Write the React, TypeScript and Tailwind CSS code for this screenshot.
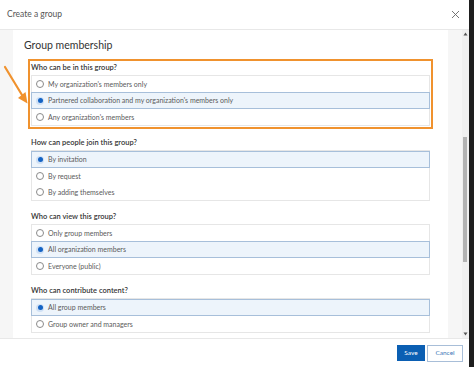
import React from "react";

type Opt = { label: string; selected?: boolean };

const Radio = ({ on }: { on?: boolean }) =>
  on ? (
    <span className="w-[8px] h-[8px] rounded-full bg-[#cfe0f5] flex items-center justify-center shrink-0">
      <span className="w-[5px] h-[5px] rounded-full bg-[#1463c4]" />
    </span>
  ) : (
    <span className="w-[8px] h-[8px] rounded-full border border-[#8a8a8a] bg-white shrink-0" />
  );

const Options = ({ opts }: { opts: Opt[] }) => (
  <div className="border border-[#e6e6e6] bg-white flex flex-col">
    {opts.map((o) => (
      <div
        key={o.label}
        className={
          o.selected
            ? "h-[17px] flex items-center gap-[4px] pl-[4px] bg-[#edf4fb] border border-[#a7bfda] -mx-px"
            : "h-[16px] flex items-center gap-[4px] pl-[4px]"
        }
      >
        <Radio on={o.selected} />
        <span className="text-[7px] leading-none text-[#5a5a5a]">{o.label}</span>
      </div>
    ))}
  </div>
);

const Section = ({ label, opts, first }: { label: string; opts: Opt[]; first?: boolean }) => (
  <div className={first ? "flex flex-col" : "flex flex-col mt-[9px] ml-[7px] w-[399px]"}>
    <div className="h-[14px] flex items-center text-[7.5px] font-semibold text-[#353535]">{label}</div>
    <Options opts={opts} />
  </div>
);

export default function App() {
  return (
    <div
      className="w-[474px] h-[367px] flex bg-white overflow-hidden relative"
      style={{ fontFamily: "Lato, 'Open Sans', sans-serif" }}
    >
      <div className="w-[469px] flex flex-col">
        <div className="h-[30px] border-b border-[#e8e8e8] flex items-center justify-between pl-[7px] pr-[9px]">
          <span className="text-[8.5px] text-[#555]">Create a group</span>
          <svg width="9" height="9" viewBox="0 0 9 9">
            <path d="M1 1 L8 8 M8 1 L1 8" stroke="#666" strokeWidth="0.9" fill="none" />
          </svg>
        </div>
        <div className="h-[308px] flex bg-[#f6f6f6]">
          <div className="ml-[13px] w-[435px] bg-white pl-[11px] pt-[9px] flex flex-col">
            <div className="h-[14px] flex items-center text-[10.5px] text-[#333]">Group membership</div>
            <div className="mt-[6px] ml-[4px] w-[405px] border-2 border-[#f0922e] px-px pb-px">
              <Section
                first
                label="Who can be in this group?"
                opts={[
                  { label: "My organization's members only" },
                  { label: "Partnered collaboration and my organization's members only", selected: true },
                  { label: "Any organization's members" },
                ]}
              />
            </div>
            <div className="h-[0px] -mt-[2px]" />
            <Section
              label="How can people join this group?"
              opts={[{ label: "By invitation", selected: true }, { label: "By request" }, { label: "By adding themselves" }]}
            />
            <Section
              label="Who can view this group?"
              opts={[{ label: "Only group members" }, { label: "All organization members", selected: true }, { label: "Everyone (public)" }]}
            />
            <Section
              label="Who can contribute content?"
              opts={[{ label: "All group members", selected: true }, { label: "Group owner and managers" }]}
            />
          </div>
          <div className="w-[14px]" />
          <div className="w-[7px] bg-[#f0f0f0] flex flex-col items-center justify-between py-[2px]">
            <svg width="5" height="4" viewBox="0 0 5 4">
              <path d="M0.5 3.5 L2.5 0.5 L4.5 3.5 Z" fill="#555" />
            </svg>
            <div className="flex-1 w-full flex flex-col pt-[101px] pb-[70px]">
              <div className="flex-1 w-[4px] ml-[1px] bg-[#b3b3b3]" />
            </div>
            <svg width="5" height="4" viewBox="0 0 5 4">
              <path d="M0.5 0.5 L2.5 3.5 L4.5 0.5 Z" fill="#555" />
            </svg>
          </div>
        </div>
        <div className="h-[29px] border-t border-[#e8e8e8] flex items-center justify-end gap-[2px] pr-[6px]">
          <button className="w-[28px] h-[16px] bg-[#0b5fb3] text-white text-[6.5px] leading-none">Save</button>
          <button className="w-[36px] h-[17px] border border-[#a8bed8] bg-white text-[#3e78b8] text-[6.5px] leading-none">
            Cancel
          </button>
        </div>
      </div>
      <div className="w-[5px] bg-[#1e1e1e]" />
      <svg className="absolute left-0 top-[60px]" width="34" height="50" viewBox="0 0 34 50">
        <path d="M5 7 L22 35" stroke="#f0922e" strokeWidth="2.2" fill="none" strokeLinecap="round" />
        <path d="M27.5 43.5 L18 38 L25.5 32 Z" fill="#f0922e" />
      </svg>
    </div>
  );
}
